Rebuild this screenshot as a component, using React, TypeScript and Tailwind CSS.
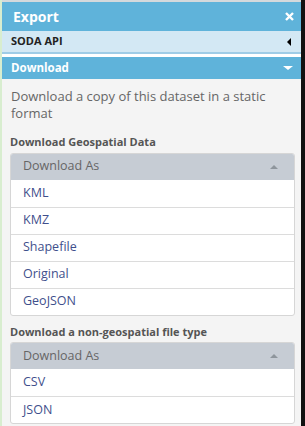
import React from 'react';

const geoItems = ['KML', 'KMZ', 'Shapefile', 'Original', 'GeoJSON'];
const flatItems = ['CSV', 'JSON'];

function DownloadList({ items }: { items: string[] }) {
  return (
    <div className="ml-[8px] mr-[6px] mt-[2px] rounded-[3px] border border-[#d6d6d6] bg-white overflow-hidden">
      <div className="h-[26px] bg-[#c6ccd4] flex items-center justify-between pl-[12px] pr-[16px]">
        <span className="text-[12.5px] text-[#666]">Download As</span>
        <span className="w-0 h-0 border-l-[4px] border-r-[4px] border-b-[4px] border-l-transparent border-r-transparent border-b-[#8e959c]" />
      </div>
      {items.map((item, i) => (
        <div
          key={item}
          className={`h-[27px] flex items-center pl-[12px] text-[12.5px] text-[#3f4f8c] ${i > 0 ? 'border-t border-[#dcdcdc]' : ''}`}
        >
          {item}
        </div>
      ))}
    </div>
  );
}

export default function App() {
  return (
    <div className="w-[305px] h-[426px] flex bg-[#f4f4f4] overflow-hidden" style={{ fontFamily: '"Open Sans", sans-serif' }}>
      {/* map edge */}
      <div className="w-[2px] shrink-0 bg-[#d8edcf]" />

      <div className="flex-1 min-w-0 flex flex-col">
        <div className="h-[2px] shrink-0 bg-[#d4d9dc]" />

        {/* Export header */}
        <div className="h-[29px] shrink-0 bg-[#5fb3da] flex items-center justify-between pl-[11px] pr-[7px]">
          <span className="text-[14px] font-bold text-white">Export</span>
          <svg width="9" height="9" viewBox="0 0 9 9">
            <path d="M1 1 L8 8 M8 1 L1 8" stroke="white" strokeWidth="2.4" />
          </svg>
        </div>

        {/* SODA API */}
        <div className="h-[23px] shrink-0 bg-[#d3e8f4] flex items-center justify-between pl-[9px] pr-[10px] border-b-[2px] border-[#9fcce6]">
          <span className="text-[11px] font-bold text-[#222]">SODA API</span>
          <span className="w-0 h-0 border-t-[4px] border-b-[4px] border-r-[4px] border-t-transparent border-b-transparent border-r-black" />
        </div>
        <div className="h-[3px] shrink-0 bg-white" />

        {/* Download */}
        <div className="h-[22px] shrink-0 bg-[#5fb3da] flex items-center justify-between pl-[9px] pr-[8px]">
          <span className="text-[11.5px] font-bold text-white">Download</span>
          <span className="w-0 h-0 border-l-[5px] border-r-[5px] border-t-[4px] border-l-transparent border-r-transparent border-t-white" />
        </div>

        {/* Body */}
        <div className="flex-1 bg-[#f4f4f4] pt-[9px]">
          <p className="px-[9px] text-[13px] leading-[17px] text-[#666]">
            Download a copy of this dataset in a static format
          </p>

          <div className="mt-[12px] px-[8px] text-[11px] font-bold text-[#555]">Download Geospatial Data</div>
          <DownloadList items={geoItems} />

          <div className="mt-[8px] px-[8px] text-[11px] font-bold text-[#555]">Download a non-geospatial file type</div>
          <DownloadList items={flatItems} />
        </div>
      </div>

      {/* window edge */}
      <div className="w-[4px] shrink-0 bg-[#111]" />
    </div>
  );
}
